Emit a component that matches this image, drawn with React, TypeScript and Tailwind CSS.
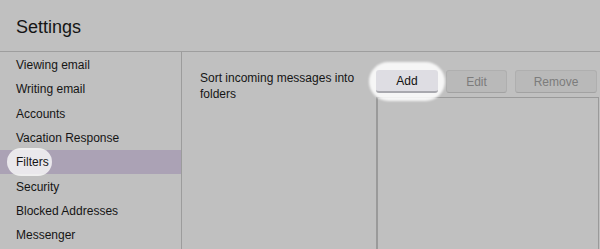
import React from 'react';

const menu = [
  'Viewing email',
  'Writing email',
  'Accounts',
  'Vacation Response',
  'Filters',
  'Security',
  'Blocked Addresses',
  'Messenger',
];

export default function App() {
  return (
    <div
      className="w-[600px] h-[249px] overflow-hidden bg-[#c0c0c0] text-[#151515] flex flex-col"
      style={{ fontFamily: '"Liberation Sans", Arial, sans-serif' }}
    >
      {/* Header */}
      <div className="h-[52px] shrink-0 border-b border-[#9e9e9e] flex items-center pl-4 pt-[2px]">
        <h1 className="text-[18px] leading-none">Settings</h1>
      </div>

      <div className="flex flex-1 min-h-0">
        {/* Sidebar */}
        <div className="w-[182px] shrink-0 border-r border-[#9c9c9c] pt-[1px]">
          {menu.map((item) => {
            const selected = item === 'Filters';
            return (
              <div
                key={item}
                className={`relative h-[24.3px] flex items-center pl-4 text-[12px] ${selected ? 'bg-[#aba2b5]' : ''}`}
              >
                {selected && (
                  <div className="absolute left-[7px] top-[-2px] w-[45px] h-[28px] rounded-full bg-white/75 blur-[0.6px]" />
                )}
                <span className="relative">{item}</span>
              </div>
            );
          })}
        </div>

        {/* Content */}
        <div className="flex-1 flex pt-[18px] pl-[18px]">
          <div className="w-[168px] shrink-0 text-[12px] leading-[16px]">
            Sort incoming messages into folders
          </div>
          <div className="flex-1 flex flex-col pr-[1px] ml-[8px]">
            <div className="relative flex gap-[8px] h-[23px]">
              <div className="absolute left-[-7px] top-[-8px] w-[76px] h-[39px] rounded-full bg-white/85 blur-[0.8px]" />
              <button className="relative w-[62px] h-[23px] rounded-[3px] bg-[#dedde3] border-b-2 border-[#a8a8ae] text-[12px] text-[#111]">
                Add
              </button>
              <button className="w-[61px] h-[23px] rounded-[3px] bg-[#b9b9b9] border border-[#afafaf] border-b-[#a2a2a2] text-[12px] text-[#7c7c7c]">
                Edit
              </button>
              <button className="w-[82px] h-[23px] rounded-[3px] bg-[#b9b9b9] border border-[#afafaf] border-b-[#a2a2a2] text-[12px] text-[#7c7c7c]">
                Remove
              </button>
            </div>
            <div className="mt-[4px] flex-1 border-l-2 border-t border-r border-[#9a9a9a] bg-[#c0c0c0]" />
          </div>
        </div>
      </div>
    </div>
  );
}
